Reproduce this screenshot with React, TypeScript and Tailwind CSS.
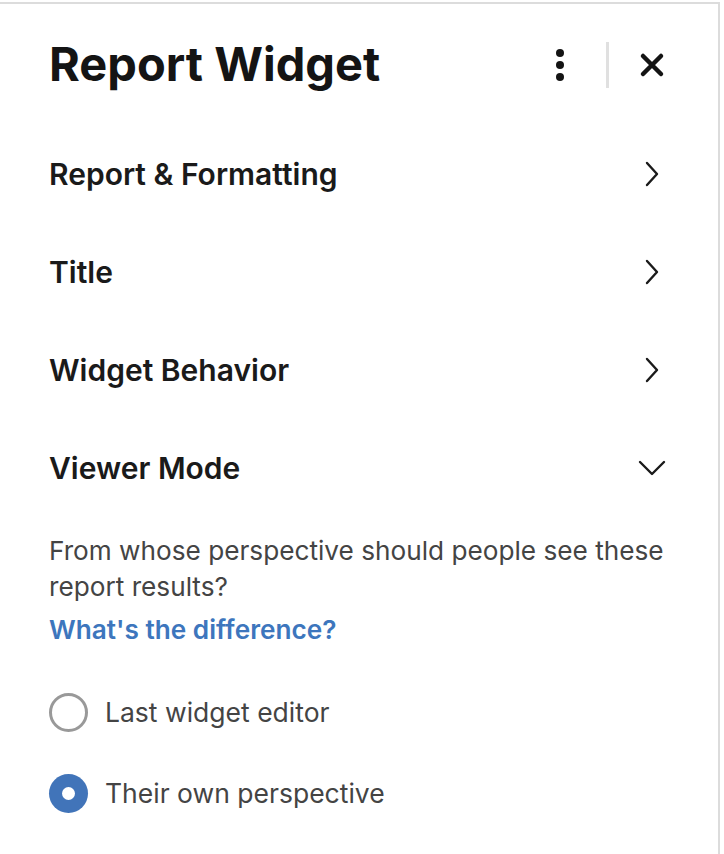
import React from "react";

const Chevron = () => (
  <svg width="16" height="26" viewBox="0 0 16 26" fill="none" className="shrink-0">
    <path d="M3 2 L13 13 L3 24" stroke="#1a1a1a" strokeWidth="2.4" strokeLinecap="round" strokeLinejoin="round" />
  </svg>
);

const ChevronDown = () => (
  <svg width="30" height="18" viewBox="0 0 30 18" fill="none" className="shrink-0">
    <path d="M3 3 L15 15 L27 3" stroke="#1a1a1a" strokeWidth="2.4" strokeLinecap="round" strokeLinejoin="round" />
  </svg>
);

function Row({ label, open }: { label: string; open?: boolean }) {
  return (
    <div className="flex h-[98px] items-center justify-between pr-[58px]">
      <span className="text-[30px] font-semibold text-[#1a1a1a]">{label}</span>
      {open ? (
        <div className="-mr-[7px]"><ChevronDown /></div>
      ) : (
        <Chevron />
      )}
    </div>
  );
}

export default function App() {
  return (
    <div className="h-[854px] w-[724px] overflow-hidden bg-white pt-[2px]" style={{ fontFamily: "Inter, 'Noto Sans', sans-serif" }}>
      <div className="h-[852px] w-[720px] border-t-2 border-r-2 border-[#dcdcdc] pl-[49px]">
        <div className="flex h-[121px] items-center justify-between pr-[53px]">
          <h1 className="text-[47px] font-bold text-[#141414]">Report Widget</h1>
          <div className="flex items-center">
            <svg width="12" height="34" viewBox="0 0 12 34" className="mr-[40px]">
              <circle cx="6" cy="5" r="4" fill="#141414" />
              <circle cx="6" cy="17" r="4" fill="#141414" />
              <circle cx="6" cy="29" r="4" fill="#141414" />
            </svg>
            <div className="mr-[30px] h-[46px] w-[3px] bg-[#e0e0e0]" />
            <svg width="26" height="26" viewBox="0 0 26 26">
              <path d="M4 4 L22 22 M22 4 L4 22" stroke="#141414" strokeWidth="4.5" strokeLinecap="round" />
            </svg>
          </div>
        </div>
        <Row label="Report & Formatting" />
        <Row label="Title" />
        <Row label="Widget Behavior" />
        <Row label="Viewer Mode" open />
        <div className="pt-[16px] pr-[40px]">
          <p className="text-[26.2px] leading-[36px] text-[#444444]">
            From whose perspective should people see these report results?
          </p>
          <a className="mt-[7px] block text-[26.2px] font-semibold leading-[36px] text-[#3d76bd]">What's the difference?</a>
          <div className="mt-[45px] flex flex-col gap-[41px]">
            <label className="flex items-center gap-[17px]">
              <span className="block h-[39px] w-[39px] rounded-full border-[3px] border-[#999999]" />
              <span className="text-[26.5px] text-[#444444]">Last widget editor</span>
            </label>
            <label className="flex items-center gap-[17px]">
              <span className="flex h-[39px] w-[39px] items-center justify-center rounded-full bg-[#4174b9]">
                <span className="block h-[13px] w-[13px] rounded-full bg-white" />
              </span>
              <span className="text-[26.5px] text-[#444444]">Their own perspective</span>
            </label>
          </div>
        </div>
      </div>
    </div>
  );
}
